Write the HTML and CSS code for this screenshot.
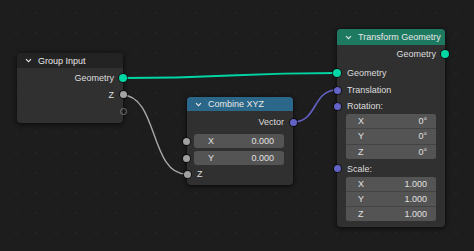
FILE: index.html
```html
<!DOCTYPE html>
<html>
<head>
<meta charset="utf-8">
<link rel="stylesheet" href="styles.css">
</head>
<body>
<div class="canvas">
  <svg class="links" width="474" height="251" viewBox="0 0 474 251">
    <path d="M123,78 C230,78 230,73 337,73" class="link geo"/>
    <path d="M293,122 C318,122 312,90 337,90" class="link vec"/>
    <path d="M122,95 C158,95 150,174 186,174" class="link flt"/>
  </svg>

  <div class="node n-group">
    <div class="header h-dark">
      <svg class="chev" width="7" height="5" viewBox="0 0 7 5"><path d="M1,1.2 L3.5,3.7 L6,1.2"/></svg>
      <span>Group Input</span>
    </div>
    <div class="body b-group">
      <div class="row out"><span>Geometry</span><i class="sock s-geo"></i></div>
      <div class="row out"><span>Z</span><i class="sock s-flt"></i></div>
      <div class="row out"><i class="sock s-empty"></i></div>
    </div>
  </div>

  <div class="node n-combine">
    <div class="header h-blue">
      <svg class="chev" width="7" height="5" viewBox="0 0 7 5"><path d="M1,1.2 L3.5,3.7 L6,1.2"/></svg>
      <span>Combine XYZ</span>
    </div>
    <div class="body b-combine">
      <div class="row out"><span>Vector</span><i class="sock s-vec"></i></div>
      <div class="field single f-x"><i class="sock in s-flt"></i><span>X</span><span>0.000</span></div>
      <div class="field single f-y"><i class="sock in s-flt"></i><span>Y</span><span>0.000</span></div>
      <div class="row in r-z"><i class="sock s-flt"></i><span>Z</span></div>
    </div>
  </div>

  <div class="node n-transform">
    <div class="header h-teal">
      <svg class="chev" width="7" height="5" viewBox="0 0 7 5"><path d="M1,1.2 L3.5,3.7 L6,1.2"/></svg>
      <span>Transform Geometry</span>
    </div>
    <div class="body b-transform">
      <div class="row out"><span>Geometry</span><i class="sock s-geo"></i></div>
      <div class="row in r-geoin"><i class="sock s-geo"></i><span>Geometry</span></div>
      <div class="row in r-trans"><i class="sock s-vec"></i><span>Translation</span></div>
      <div class="row in"><i class="sock s-vec"></i><span>Rotation:</span></div>
      <div class="stack rot">
        <div class="field"><span>X</span><span>0°</span></div>
        <div class="field"><span>Y</span><span>0°</span></div>
        <div class="field"><span>Z</span><span>0°</span></div>
      </div>
      <div class="row in r-scale"><i class="sock s-vec"></i><span>Scale:</span></div>
      <div class="stack scl">
        <div class="field"><span>X</span><span>1.000</span></div>
        <div class="field"><span>Y</span><span>1.000</span></div>
        <div class="field"><span>Z</span><span>1.000</span></div>
      </div>
    </div>
  </div>
</div>
</body>
</html>
```

FILE: styles.css
```css
* { box-sizing: border-box; }
html, body {
  margin: 0;
  padding: 0;
  background: #1d1d1d;
}
body {
  width: 474px;
  height: 251px;
  overflow: hidden;
  font-family: "Liberation Sans", Arial, sans-serif;
  font-size: 9px;
  color: #dedede;
  white-space: nowrap;
}
.canvas {
  position: relative;
  width: 474px;
  height: 251px;
  background-color: #1d1d1d;
  background-image: radial-gradient(circle, #242424 0.8px, transparent 1.1px);
  background-size: 20px 20px;
  background-position: 6px 3px;
}
.links {
  position: absolute;
  left: 0;
  top: 0;
  z-index: 0;
}
.link { fill: none; }
.link.geo { stroke: #00d6a3; stroke-width: 2; }
.link.vec { stroke: #6363c7; stroke-width: 1.6; }
.link.flt { stroke: #a8a8a8; stroke-width: 1.4; }

.node {
  position: absolute;
  z-index: 1;
  background: #303030;
  border-radius: 4px;
  box-shadow: 0 1px 4px 1px rgba(0,0,0,0.55);
}
.n-group { left: 17px; top: 53px; width: 106px; }
.n-combine { left: 187px; top: 97px; width: 106px; }
.n-transform { left: 337px; top: 29px; width: 108px; }

.header {
  display: flex;
  align-items: center;
  gap: 6px;
  padding-left: 8px;
  border-radius: 4px 4px 0 0;
  font-size: 9px;
  color: #e8e8e8;
}
.h-dark { background: #232323; height: 15px; }
.h-blue { background: #2b6788; height: 14px; }
.h-teal { background: #1d7a61; height: 16px; }
.chev { flex: none; }
.chev path { fill: none; stroke: #e6e6e6; stroke-width: 1.1; }

.body { display: flex; flex-direction: column; }
.b-group { padding: 1px 0 3px; }
.b-group .row { height: 17px; }
.b-combine { padding: 3px 0 3px; }
.b-transform { padding: 1px 0 6px; }

.row {
  position: relative;
  display: flex;
  align-items: center;
  height: 16px;
}
.row.out { justify-content: flex-end; padding-right: 9px; }
.row.in { padding-left: 10px; }

.sock {
  position: absolute;
  top: 50%;
  width: 7px;
  height: 7px;
  margin-top: -3.5px;
  border-radius: 50%;
  box-shadow: 0 0 0 1px rgba(0,0,0,0.6);
}
.row.out .sock { right: -3.5px; }
.row.in .sock, .sock.in { left: -3.5px; }
.s-geo { background: #00d6a3; width: 8px; height: 8px; margin-top: -4px; }
.row.out .s-geo { right: -4px; }
.row.in .s-geo { left: -4px; }
.s-vec { background: #6363c7; }
.s-flt { background: #a1a1a1; }
.s-empty { background: transparent; border: 1px solid #777; box-shadow: none; }

.field {
  display: flex;
  justify-content: space-between;
  align-items: center;
  padding: 0 9px 0 12px;
  color: #e0e0e0;
  background: #545454;
}
.field.single {
  position: relative;
  height: 14px;
  margin: 0 9px 0 7px;
  border-radius: 3px;
  padding-left: 14px;
  padding-right: 10px;
}
.field.single .sock.in { left: -11px; }
.f-x { margin-top: 4px !important; }
.f-y { margin-top: 3px !important; }
.r-z { margin-top: 1px; }

.r-geoin { margin-top: 3px; }
.r-trans { margin-top: 1px; }
.r-scale { margin-top: 2px; }

.stack {
  display: flex;
  flex-direction: column;
  margin: 0 9px;
  border-radius: 3px;
  overflow: hidden;
  gap: 1px;
  background: #444;
}
.rot .field { height: 14.33px; }
.scl .field { height: 14px; }
```
